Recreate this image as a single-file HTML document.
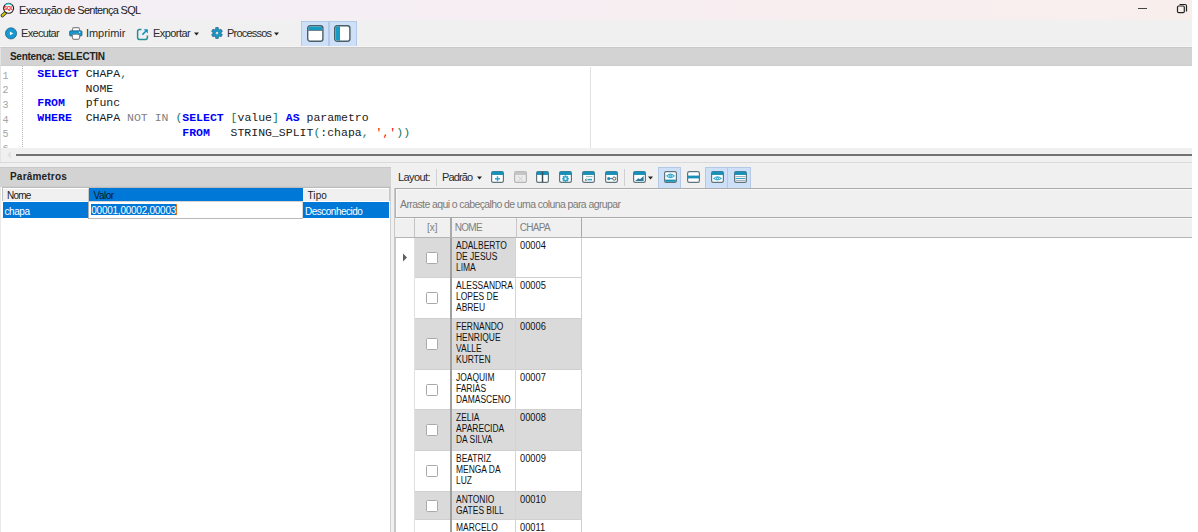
<!DOCTYPE html>
<html><head><meta charset="utf-8">
<style>
*{margin:0;padding:0;box-sizing:border-box}
html,body{width:1198px;height:532px;overflow:hidden;background:#fff}
body{position:relative;font-family:"Liberation Sans",sans-serif;font-size:11px;color:#1e1e1e}
.a{position:absolute}
.t{position:absolute;white-space:nowrap;line-height:1}
svg{position:absolute;display:block}
#titlebar{left:0;top:0;width:1192px;height:20px;background:linear-gradient(90deg,#f2eff5 0%,#f6eef3 40%,#f8eef0 70%,#f8efed 100%)}
#toolbar{left:0;top:20px;width:1192px;height:27px;background:#f0f0f0}
.hdr{background:#d3d3d3;border-top:1px solid #c9c9c9;border-bottom:1px solid #cdcdcd}
.mono{font-family:"Liberation Mono",monospace;font-size:11.5px;line-height:14.67px;white-space:pre}
.kw{color:#0000ff;font-weight:bold}
.sy{color:#107860}
.gr{color:#808080}
.st{color:#ff0000}
.id{color:#202020}
.cb{width:12px;height:12px;background:#fff;border:1.5px solid #a8a8a8;border-radius:1.5px}
.cell{font-size:10px;line-height:11.2px;color:#111;white-space:nowrap;transform:scaleX(0.845);transform-origin:0 0}
.num{transform:scaleX(0.93)}
.ln{font-family:"Liberation Mono",monospace;font-size:10px;color:#a4a4a4;line-height:14.67px}
</style></head><body>

<!-- TITLE BAR -->
<div id="titlebar" class="a">
  <svg style="left:0px;top:2px" width="16" height="16" viewBox="0 0 16 16">
    <path d="M2.4 13.6 L5.4 10.8" stroke="#2a2a3a" stroke-width="3.4" stroke-linecap="round"/>
    <path d="M2.4 13.6 L5.4 10.8" stroke="#d4c800" stroke-width="2" stroke-linecap="round"/>
    <circle cx="8.6" cy="6.3" r="5" fill="#fff" stroke="#1e1e1e" stroke-width="1.1"/>
    <path d="M5.5 3.2 A4.2 4.2 0 0 1 11.5 3.2" stroke="#30c8d0" stroke-width="1.2" fill="none"/>
    <text x="8.6" y="8.4" font-family="Liberation Sans" font-weight="bold" font-size="5.2" fill="#f01010" text-anchor="middle" letter-spacing="-0.3">SQL</text>
  </svg>
  <div class="t" style="left:19px;top:5px;font-size:11px;color:#1a1a1a;letter-spacing:-0.7px">Execução de Sentença SQL</div>
  <div class="a" style="left:1138px;top:8px;width:9px;height:1.3px;background:#444"></div>
  <svg style="left:1176px;top:3px" width="12" height="11" viewBox="0 0 12 11">
    <rect x="1.5" y="3" width="6.8" height="6.6" rx="1.2" fill="none" stroke="#222" stroke-width="1.2"/>
    <path d="M3.5 1.5 H9 Q10.5 1.5 10.5 3 V8.5" fill="none" stroke="#222" stroke-width="1.2"/>
  </svg>
</div>

<!-- TOOLBAR -->
<div id="toolbar" class="a">
  <svg style="left:5px;top:7px" width="13" height="13" viewBox="0 0 13 13">
    <circle cx="6" cy="6.4" r="5.6" fill="#1898d0" stroke="#1d5878" stroke-width="0.7"/>
    <path d="M4.9 4.6 L8.3 6.4 L4.9 8.2Z" fill="#fff"/>
  </svg>
  <div class="t" style="left:21px;top:8px;letter-spacing:-0.68px;color:#2b2b2b">Executar</div>
  <svg style="left:69px;top:7px" width="14" height="13" viewBox="0 0 14 13">
    <rect x="3.4" y="0.6" width="7.2" height="4.4" rx="1.8" fill="#fff" stroke="#858585" stroke-width="1.1"/>
    <rect x="0.6" y="3.8" width="12.4" height="5.2" rx="1" fill="#1898d0" stroke="#1d5878" stroke-width="0.7"/>
    <circle cx="10.6" cy="5.2" r="0.7" fill="#e8f6ff"/>
    <rect x="3.4" y="7.2" width="7.2" height="5.2" rx="1.8" fill="#fff" stroke="#858585" stroke-width="1.1"/>
  </svg>
  <div class="t" style="left:86px;top:8px;letter-spacing:-0.05px;color:#2b2b2b">Imprimir</div>
  <svg style="left:136px;top:8px" width="13" height="13" viewBox="0 0 13 13">
    <path d="M5.5 1.6 H3.4 Q1.6 1.6 1.6 3.4 V9.6 Q1.6 11.4 3.4 11.4 H9.6 Q11.4 11.4 11.4 9.6 V7.6" fill="none" stroke="#2a8c98" stroke-width="1.5"/>
    <path d="M6.4 6.6 L11 2" fill="none" stroke="#1690c0" stroke-width="1.5"/>
    <path d="M7.6 1.2 H11.8 V5.4Z" fill="#1690c0"/>
  </svg>
  <div class="t" style="left:153px;top:8px;letter-spacing:-0.55px;color:#2b2b2b">Exportar</div>
  <svg style="left:194px;top:12px" width="6" height="4" viewBox="0 0 6 4"><path d="M0 0.5 H5 L2.5 3.5Z" fill="#222"/></svg>
  <svg style="left:210.5px;top:7.4px" width="12" height="12" viewBox="0 0 12 12">
    <path d="M4.68 2.01 L4.69 0.55 L7.31 0.55 L7.32 2.01 L8.79 2.86 L10.06 2.15 L11.37 4.41 L10.11 5.15 L10.11 6.85 L11.37 7.59 L10.06 9.85 L8.79 9.14 L7.32 9.99 L7.31 11.45 L4.69 11.45 L4.68 9.99 L3.21 9.14 L1.94 9.85 L0.63 7.59 L1.89 6.85 L1.89 5.15 L0.63 4.41 L1.94 2.15 L3.21 2.86Z" fill="#1898c4" stroke="#1d5070" stroke-width="0.6" stroke-linejoin="round"/>
    <circle cx="6" cy="6" r="1.5" fill="#f4f4f4" stroke="#1d5070" stroke-width="0.4"/>
  </svg>
  <div class="t" style="left:227px;top:8px;letter-spacing:-0.8px;color:#2b2b2b">Processos</div>
  <svg style="left:274px;top:12px" width="6" height="4" viewBox="0 0 6 4"><path d="M0 0.5 H5 L2.5 3.5Z" fill="#222"/></svg>
  <!-- toggle buttons -->
  <div class="a" style="left:301px;top:1px;width:28px;height:26px;background:#cde0f7;border:1px solid #b3c9e6"></div>
  <div class="a" style="left:329px;top:1px;width:28px;height:26px;background:#cde0f7;border:1px solid #b3c9e6"></div>
  <svg style="left:307px;top:5px" width="17" height="17" viewBox="0 0 17 17">
    <rect x="0.7" y="0.7" width="15.2" height="15.6" rx="2.6" fill="#fff" stroke="#4c5e66" stroke-width="1.4"/>
    <path d="M1.4 3.2 Q1.4 1.4 3.2 1.4 H13.4 Q15.2 1.4 15.2 3.2 V5.2 H1.4Z" fill="#159cc4"/>
    <path d="M1.2 5.4 H15.4" stroke="#4c5e66" stroke-width="0.8"/>
  </svg>
  <svg style="left:334px;top:5px" width="17" height="17" viewBox="0 0 17 17">
    <rect x="0.7" y="0.7" width="15.2" height="15.6" rx="2.6" fill="#fff" stroke="#4c5e66" stroke-width="1.4"/>
    <path d="M3.2 1.4 Q1.4 1.4 1.4 3.2 V13.8 Q1.4 15.6 3.2 15.6 H5.2 V1.4Z" fill="#159cc4"/>
    <path d="M5.5 1.2 V15.8" stroke="#4c5e66" stroke-width="0.8"/>
  </svg>
</div>

<div class="a" style="left:0;top:46px;width:1192px;height:1px;background:#f5f5f5"></div>
<!-- SENTENCA HEADER -->
<div class="a hdr" style="left:0;top:47px;width:1192px;height:19px;border-left:1px solid #e4e4e4"></div>
<div class="t" style="left:10px;top:51.5px;font-weight:bold;font-size:10px;color:#222;letter-spacing:-0.3px">Sentença: SELECTIN</div>

<!-- SQL EDITOR -->
<div class="a" style="left:0;top:66px;width:1192px;height:82px;background:#fff;border-left:1px solid #e4e4e4;overflow:hidden">
  <div class="a ln" style="left:1.5px;top:3.5px;width:10px">1<br>2<br>3<br>4<br>5<br>6</div>
  <div class="a" style="left:21px;top:0;width:1px;height:82px;background:repeating-linear-gradient(180deg,#b4b4b4 0 1px,transparent 1px 2px)"></div>
  <div class="a" style="left:589px;top:1px;width:1px;height:81px;background:#e2e2e2"></div>
  <div class="a mono" style="left:36.3px;top:1px"><span class="kw">SELECT</span> <span class="id">CHAPA</span><span class="sy">,</span>
       <span class="id">NOME</span>
<span class="kw">FROM</span>   <span class="id">pfunc</span>
<span class="kw">WHERE</span>  <span class="id">CHAPA</span> <span class="gr">NOT IN</span> <span class="sy">(</span><span class="kw">SELECT</span> <span class="sy">[</span><span class="id">value</span><span class="sy">]</span> <span class="kw">AS</span> <span class="id">parametro</span>
                     <span class="kw">FROM</span>   <span class="id">STRING_SPLIT</span><span class="sy">(</span><span class="id">:chapa</span><span class="sy">,</span> <span class="st">','</span><span class="sy">))</span></div>
</div>

<!-- H SCROLLBAR -->
<div class="a" style="left:0;top:148px;width:1192px;height:14px;background:#f0f0f0;border-left:1px solid #e4e4e4"></div>
<svg style="left:6px;top:151px" width="6" height="8" viewBox="0 0 6 8"><path d="M5 0 L1 4 L5 8Z" fill="#e2e2e2"/></svg>
<div class="a" style="left:16px;top:154px;width:1176px;height:2px;background:#727272"></div>

<!-- SPLITTER -->
<div class="a" style="left:0;top:162px;width:1192px;height:1px;background:#dadada"></div>
<div class="a" style="left:0;top:163px;width:1192px;height:4px;background:#f0f0f0"></div>

<!-- LEFT PANEL -->
<div class="a hdr" style="left:0;top:167px;width:391px;height:20px"></div>
<div class="t" style="left:10px;top:171.5px;font-weight:bold;font-size:10px;color:#222;letter-spacing:0.2px">Parâmetros</div>
<div class="a" style="left:0;top:187px;width:390px;height:345px;background:#fff"></div>
<div class="a" style="left:0;top:187px;width:1px;height:345px;background:#e8e8e8"></div>
<div class="a" style="left:2px;top:187px;width:388px;height:1px;background:#bcbcbc"></div>
<div class="a" style="left:2px;top:187px;width:1px;height:14px;background:#c0c0c0"></div>
<div class="a" style="left:389px;top:188px;width:1px;height:13px;background:#c8c8c8"></div>
<div class="a" style="left:390px;top:187px;width:1px;height:345px;background:#d0d0d0"></div>
<div class="a" style="left:391px;top:167px;width:3px;height:365px;background:#f0f0f0"></div>
<div class="a" style="left:394px;top:188px;width:2px;height:344px;background:#c8c8c8"></div>
<!-- params grid -->
<div class="a" style="left:3px;top:188px;width:86px;height:13px;background:#f0f0f0;border-top:1px solid #fff;border-right:1px solid #c8c8c8"></div>
<div class="t" style="left:7px;top:190.8px;color:#1a1a1a;font-size:10px;letter-spacing:-0.8px">Nome</div>
<div class="a" style="left:89px;top:188px;width:214px;height:13px;background:#0078d7"></div>
<div class="t" style="left:93.5px;top:190.8px;color:#0a1a2a;font-size:10px;letter-spacing:-0.5px">Valor</div>
<div class="a" style="left:303px;top:188px;width:86px;height:13px;background:#f0f0f0;border-top:1px solid #fff"></div>
<div class="t" style="left:307.5px;top:190.8px;color:#1a1a1a;font-size:10px;letter-spacing:0.1px">Tipo</div>
<div class="a" style="left:3px;top:202px;width:386px;height:16px;background:#0078d7"></div>
<div class="t" style="left:4.5px;top:206.5px;color:#fff;font-size:10px;letter-spacing:-0.45px">chapa</div>
<div class="a" style="left:88px;top:201px;width:215px;height:18px;background:#fff;border-top:1px solid #d4d4d4;border-left:1px solid #b0b0b0;border-bottom:1px solid #b8b8b8;border-right:1px solid #d8d8d8"></div>
<div class="a" style="left:91px;top:204px;width:86px;height:11px;background:#0078d7;border-right:1px solid #e07020"></div>
<div class="t" style="left:91.3px;top:206px;color:#fff;font-size:10px;letter-spacing:-0.25px">00001,00002,00003</div>
<div class="t" style="left:305px;top:206.5px;color:#fff;font-size:10px;letter-spacing:-0.5px">Desconhecido</div>

<!-- RIGHT PANEL -->
<div class="a" style="left:391px;top:163px;width:801px;height:25px;background:#f0f0f0"></div>
<div class="t" style="left:398px;top:171.5px;color:#2b2b2b;letter-spacing:-0.58px">Layout:</div>
<div class="a" style="left:436px;top:169px;width:1px;height:17px;background:#d0d0d0"></div>
<div class="t" style="left:442px;top:171.5px;color:#2b2b2b;letter-spacing:-0.85px">Padrão</div>
<svg style="left:477px;top:176px" width="6" height="4" viewBox="0 0 6 4"><path d="M0 0.5 H5 L2.5 3.5Z" fill="#222"/></svg>


<!-- layout toolbar icons -->
<svg style="left:491px;top:171px" width="13" height="12" viewBox="0 0 13 12">
  <rect x="0.6" y="0.6" width="11.8" height="10.8" rx="1.6" fill="#fff" stroke="#5f747d" stroke-width="1.2"/>
  <rect x="0.6" y="0.6" width="11.8" height="3.2" rx="1.2" fill="#1890b8"/><rect x="0.6" y="2.4" width="11.8" height="1.4" fill="#1890b8"/><path d="M6.5 5.3 V10.2 M4 7.8 H9" stroke="#2ea6d0" stroke-width="1.4"/>
</svg>
<svg style="left:514px;top:171px" width="13" height="12" viewBox="0 0 13 12">
  <rect x="0.6" y="0.6" width="11.8" height="10.8" rx="1.6" fill="#ececec" stroke="#b4b4b4" stroke-width="1.2"/>
  <rect x="0.6" y="0.6" width="11.8" height="3.2" rx="1.2" fill="#c4c4c4"/><rect x="0.6" y="2.4" width="11.8" height="1.4" fill="#c4c4c4"/><path d="M4.2 5.5 L8.8 10 M8.8 5.5 L4.2 10" stroke="#c8c8c8" stroke-width="0.9"/>
</svg>
<svg style="left:536px;top:171px" width="13" height="12" viewBox="0 0 13 12">
  <rect x="0.6" y="0.6" width="11.8" height="10.8" rx="1.6" fill="#fff" stroke="#5f747d" stroke-width="1.2"/>
  <rect x="0.6" y="0.6" width="11.8" height="3.2" rx="1.2" fill="#1890b8"/><rect x="0.6" y="2.4" width="11.8" height="1.4" fill="#1890b8"/><path d="M6.5 0.8 V11.2" stroke="#3a4d55" stroke-width="1.5"/>
</svg>
<svg style="left:559px;top:171px" width="13" height="12" viewBox="0 0 13 12">
  <rect x="0.6" y="0.6" width="11.8" height="10.8" rx="1.6" fill="#fff" stroke="#5f747d" stroke-width="1.2"/>
  <rect x="0.6" y="0.6" width="11.8" height="3.2" rx="1.2" fill="#1890b8"/><rect x="0.6" y="2.4" width="11.8" height="1.4" fill="#1890b8"/><g transform="translate(6.5 7.7)" fill="#2ea6d0"><circle r="2.5"/><rect x="-0.8" y="-3.4" width="1.6" height="6.8" transform="rotate(0)"/><rect x="-0.8" y="-3.4" width="1.6" height="6.8" transform="rotate(45)"/><rect x="-0.8" y="-3.4" width="1.6" height="6.8" transform="rotate(90)"/><rect x="-0.8" y="-3.4" width="1.6" height="6.8" transform="rotate(135)"/></g><rect x="5.6" y="6.6" width="1.8" height="2.2" fill="#fff"/>
</svg>
<svg style="left:582px;top:171px" width="13" height="12" viewBox="0 0 13 12">
  <rect x="0.6" y="0.6" width="11.8" height="10.8" rx="1.6" fill="#fff" stroke="#5f747d" stroke-width="1.2"/>
  <rect x="0.6" y="0.6" width="11.8" height="3.2" rx="1.2" fill="#1890b8"/><rect x="0.6" y="2.4" width="11.8" height="1.4" fill="#1890b8"/><path d="M4 5.6 H10.5" stroke="#8a9aa0" stroke-width="0.8"/><path d="M3 9.2 L4.5 7.6 M3 9.2 L5.2 9.2" stroke="#607078" stroke-width="0.9"/><path d="M5.5 8.6 H10" stroke="#2ea6d0" stroke-width="1.6"/>
</svg>
<svg style="left:605px;top:171px" width="13" height="12" viewBox="0 0 13 12">
  <rect x="0.6" y="0.6" width="11.8" height="10.8" rx="1.6" fill="#fff" stroke="#5f747d" stroke-width="1.2"/>
  <rect x="0.6" y="0.6" width="11.8" height="3.2" rx="1.2" fill="#1890b8"/><rect x="0.6" y="2.4" width="11.8" height="1.4" fill="#1890b8"/><circle cx="3.8" cy="7.6" r="1.7" fill="#1890b8"/><path d="M5.4 7.6 H7.6" stroke="#3a4d55" stroke-width="0.9"/><circle cx="9.2" cy="7.6" r="1.6" fill="#fff" stroke="#3a4d55" stroke-width="0.9"/>
</svg>
<div class="a" style="left:624px;top:169px;width:1px;height:17px;background:#d0d0d0"></div>
<svg style="left:633px;top:171px" width="13" height="12" viewBox="0 0 13 12">
  <rect x="0.6" y="0.6" width="11.8" height="10.8" rx="1.6" fill="#fff" stroke="#5f747d" stroke-width="1.2"/>
  <rect x="0.6" y="0.6" width="11.8" height="3.2" rx="1.2" fill="#1890b8"/><rect x="0.6" y="2.4" width="11.8" height="1.4" fill="#1890b8"/><path d="M2.2 10 L5.5 7.3 L7 8.3 L10.6 5 V10Z" fill="#2a7c9c"/>
</svg>
<svg style="left:648px;top:176px" width="6" height="4" viewBox="0 0 6 4"><path d="M0 0.5 H5 L2.5 3.5Z" fill="#222"/></svg>
<div class="a" style="left:658px;top:167px;width:23px;height:22px;background:#cde0f7;border:1px solid #b3c9e6"></div>
<div class="a" style="left:705px;top:167px;width:23px;height:22px;background:#cde0f7;border:1px solid #b3c9e6"></div>
<div class="a" style="left:727px;top:167px;width:24px;height:22px;background:#cde0f7;border:1px solid #b3c9e6"></div>
<svg style="left:664px;top:171px" width="13" height="12" viewBox="0 0 13 12">
  <rect x="0.6" y="0.6" width="11.8" height="10.8" rx="1.6" fill="#fff" stroke="#5f747d" stroke-width="1.2"/>
  <rect x="1.2" y="8.6" width="10.6" height="2.2" fill="#1890b8"/><path d="M2.8 4.9 Q6.5 1.4 10.2 4.9 Q6.5 8.4 2.8 4.9Z" fill="#fff" stroke="#34acd2" stroke-width="1.2"/><circle cx="6.5" cy="4.9" r="1.5" fill="#34acd2"/><circle cx="6.5" cy="4.9" r="0.5" fill="#fff"/>
</svg>
<svg style="left:687px;top:171px" width="13" height="12" viewBox="0 0 13 12">
  <rect x="0.6" y="0.6" width="11.8" height="10.8" rx="1.6" fill="#fff" stroke="#5f747d" stroke-width="1.2"/>
  <rect x="0.8" y="4.6" width="11.4" height="2.8" fill="#1890b8"/>
</svg>
<svg style="left:711px;top:171px" width="13" height="12" viewBox="0 0 13 12">
  <rect x="0.6" y="0.6" width="11.8" height="10.8" rx="1.6" fill="#fff" stroke="#5f747d" stroke-width="1.2"/>
  <rect x="0.6" y="0.6" width="11.8" height="3.2" rx="1.2" fill="#1890b8"/><rect x="0.6" y="2.4" width="11.8" height="1.4" fill="#1890b8"/><path d="M2.8 7.4 Q6.5 4.2 10.2 7.4 Q6.5 10.6 2.8 7.4Z" fill="#fff" stroke="#34acd2" stroke-width="1.2"/><circle cx="6.5" cy="7.5" r="1.5" fill="#34acd2"/><circle cx="6.5" cy="7.5" r="0.5" fill="#fff"/>
</svg>
<svg style="left:734px;top:171px" width="13" height="12" viewBox="0 0 13 12">
  <rect x="0.6" y="0.6" width="11.8" height="10.8" rx="1.6" fill="#fff" stroke="#5f747d" stroke-width="1.2"/>
  <rect x="0.6" y="0.6" width="11.8" height="3.2" rx="1.2" fill="#1890b8"/><rect x="0.6" y="2.4" width="11.8" height="1.4" fill="#1890b8"/><path d="M1.5 5.6 H11.5 M1.5 9.4 H11.5" stroke="#909ea4" stroke-width="0.9"/><path d="M1.5 7.5 H11.5" stroke="#2ea6d0" stroke-width="1"/>
</svg>

<!-- group panel -->
<div class="a" style="left:395px;top:188px;width:797px;height:30px;background:#f0f0f0;border-top:1px solid #ababab;border-left:1px solid #b4b4b4"></div>
<div class="a" style="left:396px;top:189px;width:796px;height:1px;background:#f8f8f8"></div>
<div class="a" style="left:396px;top:189px;width:1px;height:28px;background:#f8f8f8"></div>
<div class="t" style="left:400px;top:199px;color:#7a7a7a;font-size:10.5px;letter-spacing:-0.6px">Arraste aqui o cabeçalho de uma coluna para agrupar</div>

<!-- main grid header -->
<div class="a" style="left:395px;top:217px;width:797px;height:21px;background:#f0f0f0;border-top:1px solid #ababab;border-bottom:1px solid #b4b4b4"></div>
<div class="a" style="left:396px;top:218px;width:796px;height:1px;background:#f8f8f8"></div>
<div class="a" style="left:414px;top:218px;width:1px;height:19px;background:#c4c4c4"></div>
<div class="a" style="left:450px;top:218px;width:2px;height:19px;background:#a8a8a8"></div>
<div class="a" style="left:516px;top:218px;width:1px;height:19px;background:#c8c8c8"></div>
<div class="a" style="left:581px;top:218px;width:1px;height:19px;background:#a8a8a8"></div>
<div class="t" style="left:427px;top:223px;color:#808080;font-size:10px">[x]</div>
<div class="t" style="left:454.8px;top:223px;color:#808080;font-size:10px;letter-spacing:-0.75px">NOME</div>
<div class="t" style="left:519.7px;top:223px;color:#808080;font-size:10px;letter-spacing:-0.7px">CHAPA</div>

<div id="rows">
<div class="a" style="left:415px;top:238px;width:35px;height:39px;background:#dadada"></div>
<div class="a" style="left:452px;top:238px;width:63px;height:39px;background:#dadada"></div>
<div class="a" style="left:516px;top:238px;width:65px;height:39px;background:#fff"></div>
<div class="a" style="left:415px;top:277px;width:35px;height:1px;background:#d0d0d0"></div>
<div class="a" style="left:452px;top:277px;width:129px;height:1px;background:#d0d0d0"></div>
<div class="a cb" style="left:426px;top:252px"></div>
<div class="a cell" style="left:456px;top:239.6px">ADALBERTO<br>DE JESUS<br>LIMA</div>
<div class="a cell num" style="left:520px;top:239.6px">00004</div>
<div class="a" style="left:415px;top:278px;width:35px;height:40px;background:#fff"></div>
<div class="a" style="left:452px;top:278px;width:63px;height:40px;background:#fff"></div>
<div class="a" style="left:516px;top:278px;width:65px;height:40px;background:#fff"></div>
<div class="a" style="left:415px;top:318px;width:35px;height:1px;background:#d0d0d0"></div>
<div class="a" style="left:452px;top:318px;width:129px;height:1px;background:#d0d0d0"></div>
<div class="a cb" style="left:426px;top:292px"></div>
<div class="a cell" style="left:456px;top:279.6px">ALESSANDRA<br>LOPES DE<br>ABREU</div>
<div class="a cell num" style="left:520px;top:279.6px">00005</div>
<div class="a" style="left:415px;top:319px;width:35px;height:50px;background:#dadada"></div>
<div class="a" style="left:452px;top:319px;width:63px;height:50px;background:#dadada"></div>
<div class="a" style="left:516px;top:319px;width:65px;height:50px;background:#dadada"></div>
<div class="a" style="left:415px;top:369px;width:35px;height:1px;background:#d0d0d0"></div>
<div class="a" style="left:452px;top:369px;width:129px;height:1px;background:#d0d0d0"></div>
<div class="a cb" style="left:426px;top:338px"></div>
<div class="a cell" style="left:456px;top:320.6px">FERNANDO<br>HENRIQUE<br>VALLE<br>KURTEN</div>
<div class="a cell num" style="left:520px;top:320.6px">00006</div>
<div class="a" style="left:415px;top:370px;width:35px;height:39px;background:#fff"></div>
<div class="a" style="left:452px;top:370px;width:63px;height:39px;background:#fff"></div>
<div class="a" style="left:516px;top:370px;width:65px;height:39px;background:#fff"></div>
<div class="a" style="left:415px;top:409px;width:35px;height:1px;background:#d0d0d0"></div>
<div class="a" style="left:452px;top:409px;width:129px;height:1px;background:#d0d0d0"></div>
<div class="a cb" style="left:426px;top:384px"></div>
<div class="a cell" style="left:456px;top:371.6px">JOAQUIM<br>FARIAS<br>DAMASCENO</div>
<div class="a cell num" style="left:520px;top:371.6px">00007</div>
<div class="a" style="left:415px;top:410px;width:35px;height:40px;background:#dadada"></div>
<div class="a" style="left:452px;top:410px;width:63px;height:40px;background:#dadada"></div>
<div class="a" style="left:516px;top:410px;width:65px;height:40px;background:#dadada"></div>
<div class="a" style="left:415px;top:450px;width:35px;height:1px;background:#d0d0d0"></div>
<div class="a" style="left:452px;top:450px;width:129px;height:1px;background:#d0d0d0"></div>
<div class="a cb" style="left:426px;top:424px"></div>
<div class="a cell" style="left:456px;top:411.6px">ZELIA<br>APARECIDA<br>DA SILVA</div>
<div class="a cell num" style="left:520px;top:411.6px">00008</div>
<div class="a" style="left:415px;top:451px;width:35px;height:40px;background:#fff"></div>
<div class="a" style="left:452px;top:451px;width:63px;height:40px;background:#fff"></div>
<div class="a" style="left:516px;top:451px;width:65px;height:40px;background:#fff"></div>
<div class="a" style="left:415px;top:491px;width:35px;height:1px;background:#d0d0d0"></div>
<div class="a" style="left:452px;top:491px;width:129px;height:1px;background:#d0d0d0"></div>
<div class="a cb" style="left:426px;top:465px"></div>
<div class="a cell" style="left:456px;top:452.6px">BEATRIZ<br>MENGA DA<br>LUZ</div>
<div class="a cell num" style="left:520px;top:452.6px">00009</div>
<div class="a" style="left:415px;top:492px;width:35px;height:27px;background:#dadada"></div>
<div class="a" style="left:452px;top:492px;width:63px;height:27px;background:#dadada"></div>
<div class="a" style="left:516px;top:492px;width:65px;height:27px;background:#dadada"></div>
<div class="a" style="left:415px;top:519px;width:35px;height:1px;background:#d0d0d0"></div>
<div class="a" style="left:452px;top:519px;width:129px;height:1px;background:#d0d0d0"></div>
<div class="a cb" style="left:426px;top:500px"></div>
<div class="a cell" style="left:456px;top:493.6px">ANTONIO<br>GATES BILL</div>
<div class="a cell num" style="left:520px;top:493.6px">00010</div>
<div class="a" style="left:415px;top:520px;width:35px;height:40px;background:#fff"></div>
<div class="a" style="left:452px;top:520px;width:63px;height:40px;background:#fff"></div>
<div class="a" style="left:516px;top:520px;width:65px;height:40px;background:#fff"></div>
<div class="a" style="left:415px;top:560px;width:35px;height:1px;background:#d0d0d0"></div>
<div class="a" style="left:452px;top:560px;width:129px;height:1px;background:#d0d0d0"></div>
<div class="a cb" style="left:426px;top:534px"></div>
<div class="a cell" style="left:456px;top:521.6px">MARCELO<br>X<br>Y</div>
<div class="a cell num" style="left:520px;top:521.6px">00011</div>
<div class="a" style="left:414px;top:238px;width:1px;height:294px;background:#e0e0e0"></div>
<div class="a" style="left:450px;top:238px;width:2px;height:294px;background:#a0a0a0"></div>
<div class="a" style="left:515px;top:238px;width:1px;height:294px;background:#d4d4d4"></div>
<div class="a" style="left:581px;top:238px;width:1px;height:294px;background:#d0d0d0"></div>
<svg style="left:402px;top:253px" width="6" height="9" viewBox="0 0 6 9"><path d="M1 0.5 L5 4.5 L1 8.5Z" fill="#606060"/></svg>
</div><!--/rows-->

</body></html>
